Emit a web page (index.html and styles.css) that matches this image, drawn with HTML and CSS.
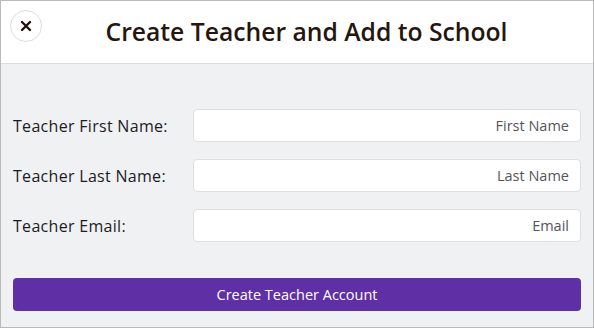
FILE: index.html
```html
<!DOCTYPE html>
<html>
<head>
<meta charset="utf-8">
<link rel="stylesheet" href="styles.css">
</head>
<body>
<div class="modal">
  <header class="modal-header">
    <button class="close-btn" aria-label="Close">
      <svg width="12" height="12" viewBox="0 0 12 12"><path d="M2 2 L10 10 M10 2 L2 10" stroke="#1e120c" stroke-width="2.4" stroke-linecap="round"/></svg>
    </button>
    <h1 class="title">Create Teacher and Add to School</h1>
  </header>
  <form class="modal-body">
    <div class="rows">
      <label class="row"><span class="label">Teacher First Name:</span><input class="field" placeholder="First Name"></label>
      <label class="row"><span class="label">Teacher Last Name:</span><input class="field" placeholder="Last Name"></label>
      <label class="row"><span class="label">Teacher Email:</span><input class="field" placeholder="Email"></label>
    </div>
    <button type="button" class="submit">Create Teacher Account</button>
  </form>
</div>
</body>
</html>
```
FILE: styles.css
```css
* { box-sizing: border-box; }
html, body { margin: 0; padding: 0; }
body { font-family: "Open Sans", "Noto Sans", sans-serif; background: #fff; }
.modal {
  width: 594px;
  height: 328px;
  border: 1px solid #b9b9bb;
  background: #f0f1f3;
  display: flex;
  flex-direction: column;
}
.modal-header {
  height: 63px;
  background: #fff;
  border-bottom: 1px solid #dcdde0;
  display: flex;
  align-items: center;
  padding: 0 10px 0 9px;
  flex-shrink: 0;
}
.close-btn {
  width: 32px;
  height: 32px;
  border-radius: 50%;
  border: 1px solid #dcdce2;
  background: #fff;
  display: flex;
  align-items: center;
  justify-content: center;
  padding: 0;
  margin-top: -13px;
  flex-shrink: 0;
}
.title {
  flex: 1;
  text-align: center;
  margin: 0;
  font-size: 24.7px;
  font-weight: 600;
  color: #24160f;
  padding-right: 12px;
  margin-top: -2px;
}
.modal-body {
  margin: 0;
  padding: 45px 12px 0 12px;
  display: flex;
  flex-direction: column;
}
.rows { display: flex; flex-direction: column; gap: 17px; }
.row { display: flex; align-items: center; }
.label {
  width: 180px;
  font-size: 16px;
  letter-spacing: 0.3px;
  color: #1c1c1e;
  flex-shrink: 0;
}
.field {
  flex: 1;
  height: 33px;
  border: 1px solid #dedfe3;
  border-radius: 4px;
  background: #fff;
  text-align: right;
  padding: 0 11px;
  font-family: inherit;
  font-size: 14.5px;
  outline: none;
}
.field::placeholder { color: #55555b; }
.submit {
  margin-top: 36px;
  height: 33px;
  width: 100%;
  background: #5f2fa6;
  color: #fff;
  border: none;
  border-radius: 4px;
  font-family: inherit;
  font-size: 14.5px;
}
```
